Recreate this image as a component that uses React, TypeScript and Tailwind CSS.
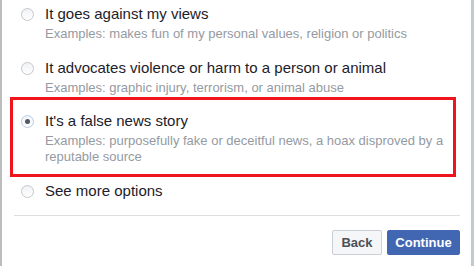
import React from "react";

type Option = {
  title: string;
  sub?: string;
  selected?: boolean;
};

const options: Option[] = [
  {
    title: "It goes against my views",
    sub: "Examples: makes fun of my personal values, religion or politics",
  },
  {
    title: "It advocates violence or harm to a person or animal",
    sub: "Examples: graphic injury, terrorism, or animal abuse",
  },
  {
    title: "It's a false news story",
    sub: "Examples: purposefully fake or deceitful news, a hoax disproved by a reputable source",
    selected: true,
  },
  { title: "See more options" },
];

const Radio: React.FC<{ checked?: boolean }> = ({ checked }) => (
  <div className="flex h-[20px] w-[13px] shrink-0 items-center">
    {checked ? (
      <span className="flex h-[13px] w-[13px] items-center justify-center rounded-full border border-[#bccbe2] bg-gradient-to-b from-[#f0f4fa] to-white">
        <span className="h-[5px] w-[5px] rounded-full bg-[#55595f]" />
      </span>
    ) : (
      <span className="h-[13px] w-[13px] rounded-full border border-[#c4c7cc] bg-gradient-to-b from-[#f1f2f4] to-white" />
    )}
  </div>
);

const OptionRow: React.FC<{ option: Option; className: string }> = ({ option, className }) => (
  <div className={className}>
    <div className="flex gap-[11px]">
      <Radio checked={option.selected} />
      <div className="flex flex-col">
        <div className="text-[15px] leading-[20px] text-[#1d2129]">{option.title}</div>
        {option.sub && (
          <div className="mt-[2px] text-[13px] leading-[16px] text-[#959aa2]">{option.sub}</div>
        )}
      </div>
    </div>
  </div>
);

export default function App() {
  return (
    <div
      className="flex h-[266px] w-[474px] overflow-hidden bg-white"
      style={{ fontFamily: '"Liberation Sans", Arial, sans-serif' }}
    >
      <div className="w-[2px] shrink-0 bg-[#bdbdbd]" />
      <div className="flex flex-1 flex-col">
        <div className="flex flex-col pt-[4px]">
          <OptionRow option={options[0]} className="ml-[8px] mr-[15px] border-x-[3px] border-transparent pl-[8px]" />
          <OptionRow option={options[1]} className="ml-[8px] mr-[15px] mt-[16px] border-x-[3px] border-transparent pl-[8px]" />
          <OptionRow
            option={options[2]}
            className="ml-[8px] mr-[15px] mt-[1px] border-[3px] border-[#f0141c] pb-[9px] pl-[8px] pt-[11px]"
          />
          <OptionRow option={options[3]} className="ml-[8px] mr-[15px] mt-[4px] border-x-[3px] border-transparent pl-[8px]" />
        </div>
        <div className="ml-[12px] mr-[11px] mt-[14px] h-px bg-[#dddfe2]" />
        <div className="ml-[12px] mr-[11px] mt-[14px] flex justify-end gap-[5px]">
          <button className="h-[25px] w-[50px] rounded-[2px] border border-[#ccd0d5] bg-[#f5f6f7] text-[13px] font-bold text-[#4b4f56]">
            Back
          </button>
          <button className="h-[25px] w-[73px] rounded-[2px] border border-[#4267b2] bg-[#4267b2] text-[13px] font-bold text-white">
            Continue
          </button>
        </div>
      </div>
      <div className="w-[3px] shrink-0 bg-[#c3cacd]" />
    </div>
  );
}
